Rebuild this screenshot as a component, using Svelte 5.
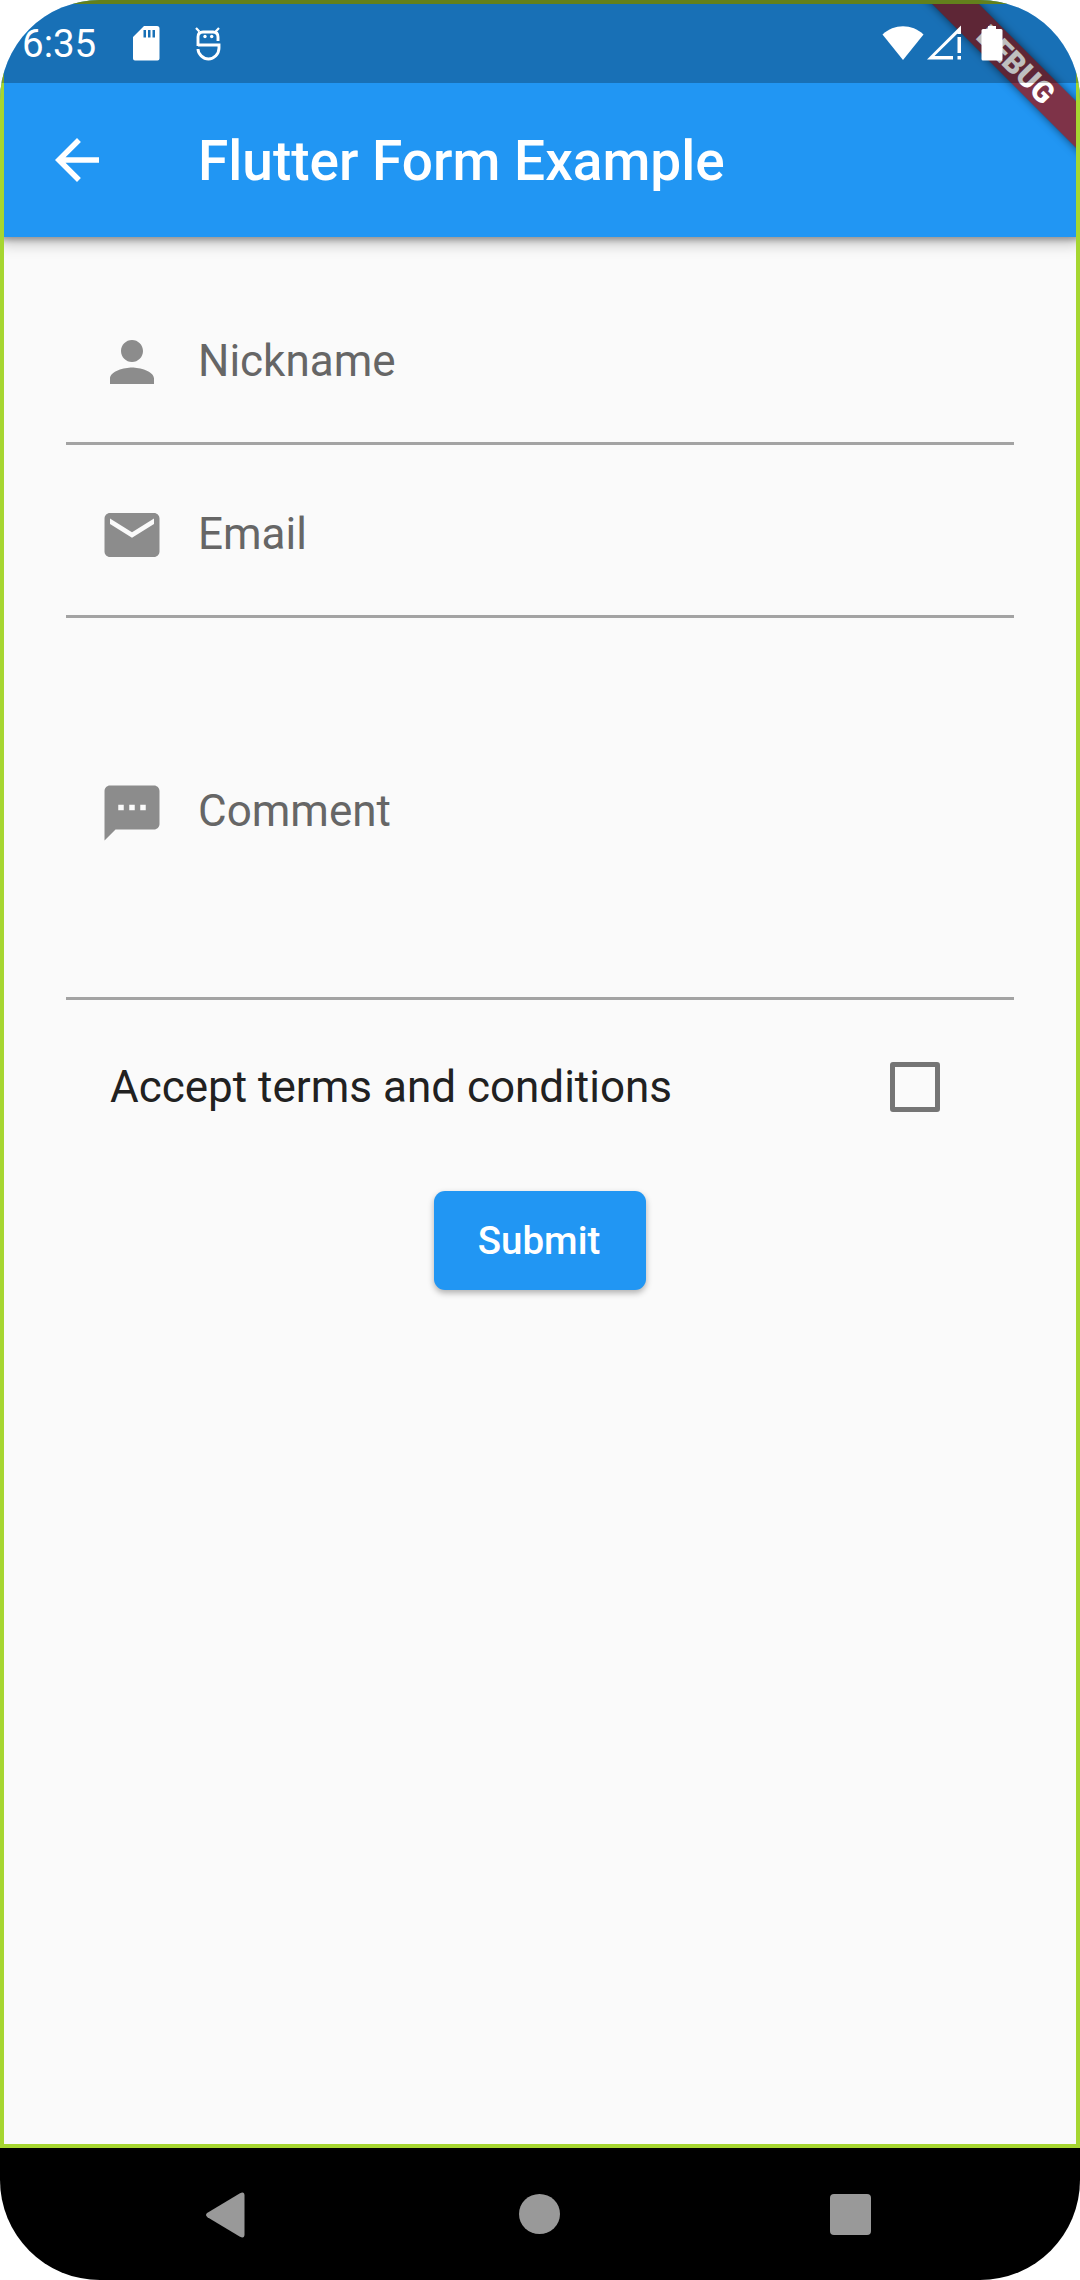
<script>
  const fields = [
    { label: 'Nickname', cls: 'first', icon: 'person' },
    { label: 'Email', cls: 'short', icon: 'email' },
    { label: 'Comment', cls: 'tall', icon: 'comment' }
  ];
</script>

<div class="device">
  <div class="screen">
    <header class="top">
      <div class="status">
        <div class="status-left">
          <span class="time">6:35</span>
          <svg class="sd" viewBox="0 0 28 36"><path fill-rule="evenodd" d="M12 1H25a2.500 2.500 0 0 1 2.500 2.500v30a2 2 0 0 1-2 2H3a2 2 0 0 1-2-2V12ZM11.500 5v7.500h2.500V5Zm4.500 0v7.500h2.500V5Zm4.500 0v7.500h2.500V5Z"/></svg>
          <svg class="robot" viewBox="0 0 26 36" fill="none" stroke="#fff" stroke-width="2.900">
            <path d="M3 20V11Q3 6 8 6H18Q23 6 23 11V15"/>
            <path d="M3 19H24V22C24 28 19 33 13.500 33C8 33 3 28 3 23"/>
            <path d="M1 2l3.300 3.600M24 2l-3.300 3.600" stroke-width="2.200"/>
            <circle cx="10" cy="10.500" r="1.700" fill="#fff" stroke="none"/><circle cx="16.700" cy="10.500" r="1.700" fill="#fff" stroke="none"/>
          </svg>
        </div>
        <div class="status-right">
          <svg class="wifi" viewBox="0 0 42 36"><path d="M0.500 9.500C12 -1.500 30 -1.500 41.500 9.500L21 35Z"/></svg>
          <svg class="signal" viewBox="0 0 36 36"><path d="M0 34.500L34 .5V9H30.500V8.500L7.500 31H26V34.500Z"/><rect x="30.500" y="12" width="3.500" height="16"/><rect x="30.500" y="31" width="3.500" height="3.500"/></svg>
          <svg class="battery" viewBox="0 0 22 36"><path d="M7 1h8v3h5a1.500 1.500 0 0 1 1.500 1.500V34a1.500 1.500 0 0 1-1.500 1.500H2A1.500 1.500 0 0 1 .5 34V5.500A1.500 1.500 0 0 1 2 4h5Z"/></svg>
        </div>
      </div>
      <div class="appbar">
        <svg class="back" viewBox="0 0 24 24"><path d="M20 11H7.830l5.590-5.590L12 4l-8 8 8 8 1.410-1.410L7.830 13H20v-2z"/></svg>
        <h1>Flutter Form Example</h1>
      </div>
    </header>

    <main class="form">
      {#each fields as f}
        <div class="field {f.cls}">
          <span class="icon">
            {#if f.icon === 'person'}
              <svg viewBox="0 0 24 24"><path d="M12 12c2.210 0 4-1.790 4-4s-1.790-4-4-4-4 1.790-4 4 1.790 4 4 4zm0 2c-2.670 0-8 1.340-8 4v2h16v-2c0-2.660-5.330-4-8-4z"/></svg>
            {:else if f.icon === 'email'}
              <svg viewBox="0 0 24 24"><path d="M20 4H4c-1.100 0-1.990.9-1.990 2L2 18c0 1.100.9 2 2 2h16c1.100 0 2-.9 2-2V6c0-1.100-.9-2-2-2zm0 4l-8 5-8-5V6l8 5 8-5v2z"/></svg>
            {:else}
              <svg viewBox="0 0 24 24"><path d="M20 2H4c-1.100 0-1.990.9-1.990 2L2 22l4-4h14c1.100 0 2-.9 2-2V4c0-1.100-.9-2-2-2zM9 11H7V9h2v2zm4 0h-2V9h2v2zm4 0h-2V9h2v2z"/></svg>
            {/if}
          </span>
          <span class="label">{f.label}</span>
        </div>
      {/each}

      <div class="terms">
        <span>Accept terms and conditions</span>
        <span class="checkbox"></span>
      </div>

      <button class="submit" type="button">Submit</button>
    </main>

    <div class="frame"></div>
    <div class="banner">DEBUG</div>
  </div>

  <nav class="nav">
    <svg class="nav-back" viewBox="0 0 39 46"><path d="M1.500 20.800L34 1.200Q38.500 -.8 38.500 3.500V42.500Q38.500 46.800 34 44.800L1.500 25.200Q-1.500 23 1.500 20.800Z"/></svg>
    <span class="nav-home"></span>
    <span class="nav-recent"></span>
  </nav>
</div>

<style>
  :global(body) { margin: 0; background: #fff; }

  .device {
    width: 1080px;
    height: 2280px;
    display: flex;
    flex-direction: column;
    background: #fff;
    font-family: Roboto, sans-serif;
  }

  .screen {
    position: relative;
    height: 2148px;
    flex: none;
    display: flex;
    flex-direction: column;
    background: #fafafa;
    border-radius: 100px 100px 0 0;
    overflow: hidden;
  }

  .top {
    flex: none;
    background: #2196f3;
    box-shadow: 0 3px 5px rgba(0, 0, 0, .25), 0 6px 14px rgba(0, 0, 0, .25);
    position: relative;
  }

  .status {
    position: relative;
    z-index: 5;
    height: 83px;
    box-sizing: border-box;
    padding: 17px 0 0 22px;
    border-top: 4px solid rgba(0, 0, 0, .2);
    display: flex;
    justify-content: space-between;
    align-items: flex-start;
    background: rgba(0, 0, 0, .25);
  }

  .status-left { display: flex; align-items: flex-start; }

  .time {
    color: #fff;
    font-size: 38.500px;
    line-height: 46px;
  }

  .sd { width: 28px; height: 36px; margin: 4px 0 0 36px; fill: #fff; }
  .robot { width: 26px; height: 36px; margin: 5px 0 0 35px; }

  .status-right { display: flex; align-items: flex-start; padding-top: 4px; margin-right: 77px; }
  .status-right svg { height: 36px; fill: #fff; display: block; }
  .wifi { width: 42px; }
  .signal { width: 36px; margin-left: 3px; }
  .battery { width: 22px; margin-left: 18px; }

  .appbar {
    height: 154px;
    display: flex;
    align-items: center;
    padding-left: 44px;
  }

  .back { width: 66px; height: 66px; fill: #fff; flex: none; }

  h1 {
    margin: 3px 0 0 88px;
    color: #fff;
    font-size: 55px;
    font-weight: 500;
    line-height: 1;
  }

  .form {
    flex: 1;
    display: flex;
    flex-direction: column;
    padding: 0 66px;
  }

  .field {
    display: flex;
    align-items: center;
    border-bottom: 3px solid #a3a3a3;
    box-sizing: border-box;
    padding-top: 10px;
    flex: none;
  }

  .field.first { height: 208px; padding-top: 45px; }
  .field.short { height: 173px; }
  .field.tall { height: 382px; }

  .icon { width: 66px; height: 66px; margin-left: 33px; flex: none; }
  .icon svg { width: 66px; height: 66px; fill: #8c8c8c; display: block; }

  .label {
    margin: 0 0 3px 33px;
    font-size: 44px;
    line-height: 52px;
    color: #666;
  }

  .terms {
    display: flex;
    align-items: center;
    justify-content: space-between;
    height: 173px;
    flex: none;
    padding: 0 74px 0 44px;
    font-size: 44px;
    color: #212121;
  }

  .checkbox {
    width: 50px;
    height: 50px;
    box-sizing: border-box;
    border: 5px solid #757575;
    border-radius: 3px;
  }

  .submit {
    align-self: center;
    margin-top: 18px;
    width: 212px;
    height: 99px;
    border: 0;
    padding: 0 2px 0 0;
    border-radius: 11px;
    background: #2196f3;
    color: #fff;
    font-family: Roboto, sans-serif;
    font-size: 38.500px;
    font-weight: 500;
    box-shadow: 0 3px 6px rgba(0, 0, 0, .3);
  }

  .frame {
    position: absolute;
    inset: 0;
    border: 4px solid #a6d630;
    z-index: 2;
    pointer-events: none;
  }

  .banner {
    position: absolute;
    left: 816px;
    top: 48px;
    width: 400px;
    height: 33px;
    transform: rotate(45deg);
    background: rgba(158, 18, 15, .75);
    box-shadow: 0 0 9px rgba(0, 0, 0, .55);
    color: #fff;
    font-size: 30px;
    font-weight: 900;
    line-height: 33px;
    text-align: center;
    z-index: 1;
    pointer-events: none;
  }

  .nav {
    flex: 1;
    background: #000;
    border-radius: 0 0 100px 100px;
    position: relative;
  }

  .nav-back { position: absolute; left: 206px; top: 44px; width: 39px; height: 46px; fill: #999; }
  .nav-home { position: absolute; left: 519px; top: 46px; width: 41px; height: 40px; border-radius: 50%; background: #999; }
  .nav-recent { position: absolute; left: 830px; top: 46px; width: 41px; height: 41px; border-radius: 4px; background: #999; }
</style>
